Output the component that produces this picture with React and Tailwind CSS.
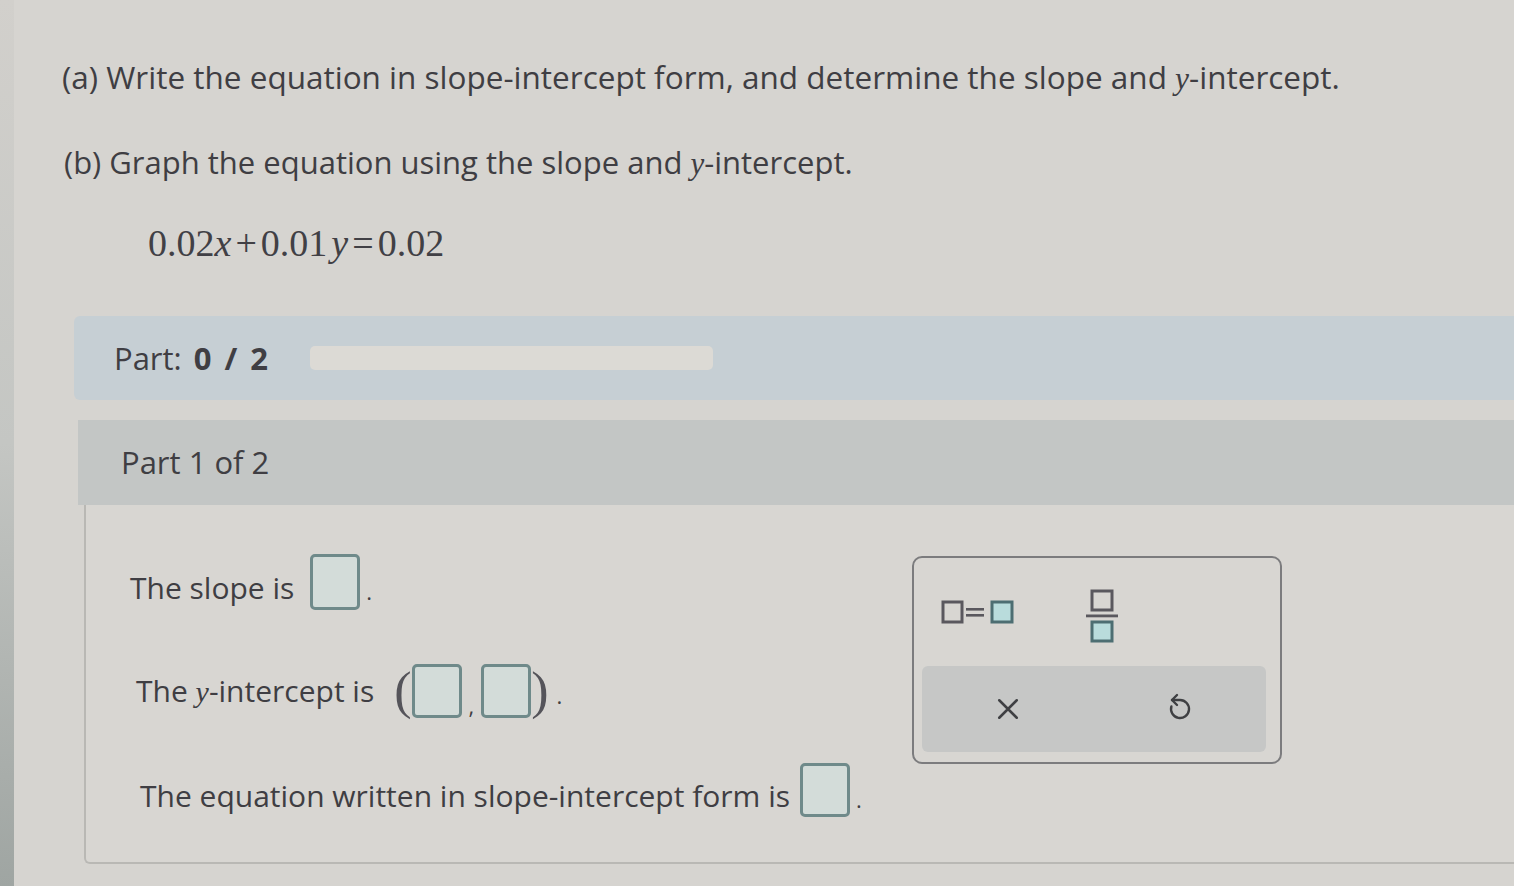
import React from "react";

const sans = { fontFamily: '"Open Sans", "DejaVu Sans", sans-serif' };
const serif = { fontFamily: '"Liberation Serif", "Times New Roman", serif' };

function Y() {
  return (
    <span className="italic" style={serif}>
      y
    </span>
  );
}

function Box({ w = 50, h = 54 }) {
  return (
    <span
      className="inline-block rounded-[5px] border-[3px] border-[#6f8a8a] bg-[#d3dcd9]"
      style={{ width: w, height: h }}
    />
  );
}

function UndoIcon() {
  return (
    <svg width="40" height="40" viewBox="0 0 40 40" fill="none" stroke="#3f4043" strokeWidth="2.4" strokeLinecap="round" strokeLinejoin="round">
      <path d="M17 6 L12 11 L17 16" />
      <path d="M12 11 H20 A9 9 0 1 1 11.4 17.4" />
    </svg>
  );
}

function EqIcon() {
  return (
    <svg width="76" height="26" viewBox="0 0 76 26">
      <rect x="3" y="3" width="19" height="20" fill="none" stroke="#5a585e" strokeWidth="3" />
      <rect x="26" y="9" width="18" height="2.6" fill="#5a585e" />
      <rect x="26" y="15" width="18" height="2.6" fill="#5a585e" />
      <rect x="52" y="3" width="20" height="20" fill="#b9dcdc" stroke="#4d6e72" strokeWidth="3" />
    </svg>
  );
}

function FracIcon() {
  return (
    <svg width="36" height="56" viewBox="0 0 36 56">
      <rect x="8" y="3" width="20" height="19" fill="none" stroke="#5a585e" strokeWidth="3" />
      <rect x="2" y="26.5" width="32" height="2.8" fill="#5a585e" />
      <rect x="8" y="34" width="20" height="19" fill="#b9dcdc" stroke="#4d6e72" strokeWidth="3" />
    </svg>
  );
}

export default function App() {
  return (
    <div
      className="relative flex h-[886px] w-[1514px] overflow-hidden bg-[#d6d4d0] text-[#3f3e43]"
      style={sans}
    >
      <div className="w-[14px] shrink-0 bg-gradient-to-b from-[#d2d0cc] via-[#c4c6c3] to-[#9fa5a2]" />
      <div className="flex min-w-0 flex-1 flex-col">
        <div className="pl-[48px] pt-[57px] text-[31.5px] leading-[40px]">
          (a) Write the equation in slope-intercept form, and determine the slope and <Y />-intercept.
        </div>
        <div className="pl-[50px] pt-[43px] text-[31px] leading-[40px]">
          (b) Graph the equation using the slope and <Y />-intercept.
        </div>
        <div className="pl-[134px] pt-[36px] text-[38px] leading-[46px] text-[#414045]" style={serif}>
          0.02<span className="italic">x</span>
          <span className="px-[4px]">+</span>0.01<span className="pl-[4px] italic">y</span>
          <span className="px-[4px]">=</span>0.02
        </div>

        <div className="ml-[60px] mt-[50px] flex h-[84px] items-center rounded-l-[6px] bg-[#c6cfd4] pl-[40px]">
          <span className="text-[31px]">
            Part: <span className="ml-[4px] font-bold">0<span className="px-[13px]">/</span>2</span>
          </span>
          <div className="ml-[42px] h-[24px] w-[403px] rounded-[5px] bg-[#dcdad5]" />
        </div>

        <div className="ml-[64px] mt-[20px] flex flex-1 flex-col">
          <div className="flex h-[85px] shrink-0 items-center bg-[#c3c6c5] pl-[43px] text-[31px]">
            Part 1 of 2
          </div>
          <div className="mb-[22px] ml-[6px] flex flex-1 rounded-bl-[6px] border-b-2 border-l-2 border-[#b9b8b4] bg-[#d8d6d2]">
            <div className="flex w-[826px] shrink-0 flex-col gap-[48px] pl-[44px] pt-[54px] text-[30px]">
              <div className="flex h-[56px] items-center">
                <span>The slope is</span>
                <span className="ml-[16px]"><Box w={50} h={56} /></span>
                <span className="ml-[6px] mt-[8px] text-[22px]">.</span>
              </div>
              <div className="ml-[6px] flex h-[56px] items-center">
                <span>
                  The <Y />-intercept is
                </span>
                <span className="ml-[20px] flex items-center">
                  <span className="text-[52px] font-light leading-none text-[#55545a]" style={serif}>(</span>
                  <Box w={50} h={54} />
                  <span className="mx-[7px] mt-[28px] text-[22px] leading-none">,</span>
                  <Box w={50} h={54} />
                  <span className="text-[52px] font-light leading-none text-[#55545a]" style={serif}>)</span>
                </span>
                <span className="ml-[8px] mt-[8px] text-[22px]">.</span>
              </div>
              <div className="ml-[10px] flex h-[56px] items-center">
                <span>The equation written in slope-intercept form is</span>
                <span className="ml-[10px]"><Box w={50} h={54} /></span>
                <span className="ml-[6px] mt-[8px] text-[22px]">.</span>
              </div>
            </div>
            <div className="mt-[51px] flex h-[208px] w-[370px] shrink-0 flex-col rounded-[10px] border-2 border-[#7c7c7e] bg-[#d8d6d2]">
              <div className="flex h-[108px] items-center pl-[26px]">
                <EqIcon />
                <span className="ml-[68px] mt-[8px]"><FracIcon /></span>
              </div>
              <div className="mb-[10px] ml-[8px] mr-[14px] flex flex-1 items-center rounded-[6px] bg-[#c6c7c6]">
                <div className="flex w-1/2 items-center justify-center">
                  <svg width="30" height="30" viewBox="0 0 24 24" fill="none" stroke="#3f4043" strokeWidth="2" strokeLinecap="round">
                    <path d="M5 5 L19 19 M19 5 L5 19" />
                  </svg>
                </div>
                <div className="flex w-1/2 items-center justify-center">
                  <UndoIcon />
                </div>
              </div>
            </div>
          </div>
        </div>
      </div>
    </div>
  );
}
